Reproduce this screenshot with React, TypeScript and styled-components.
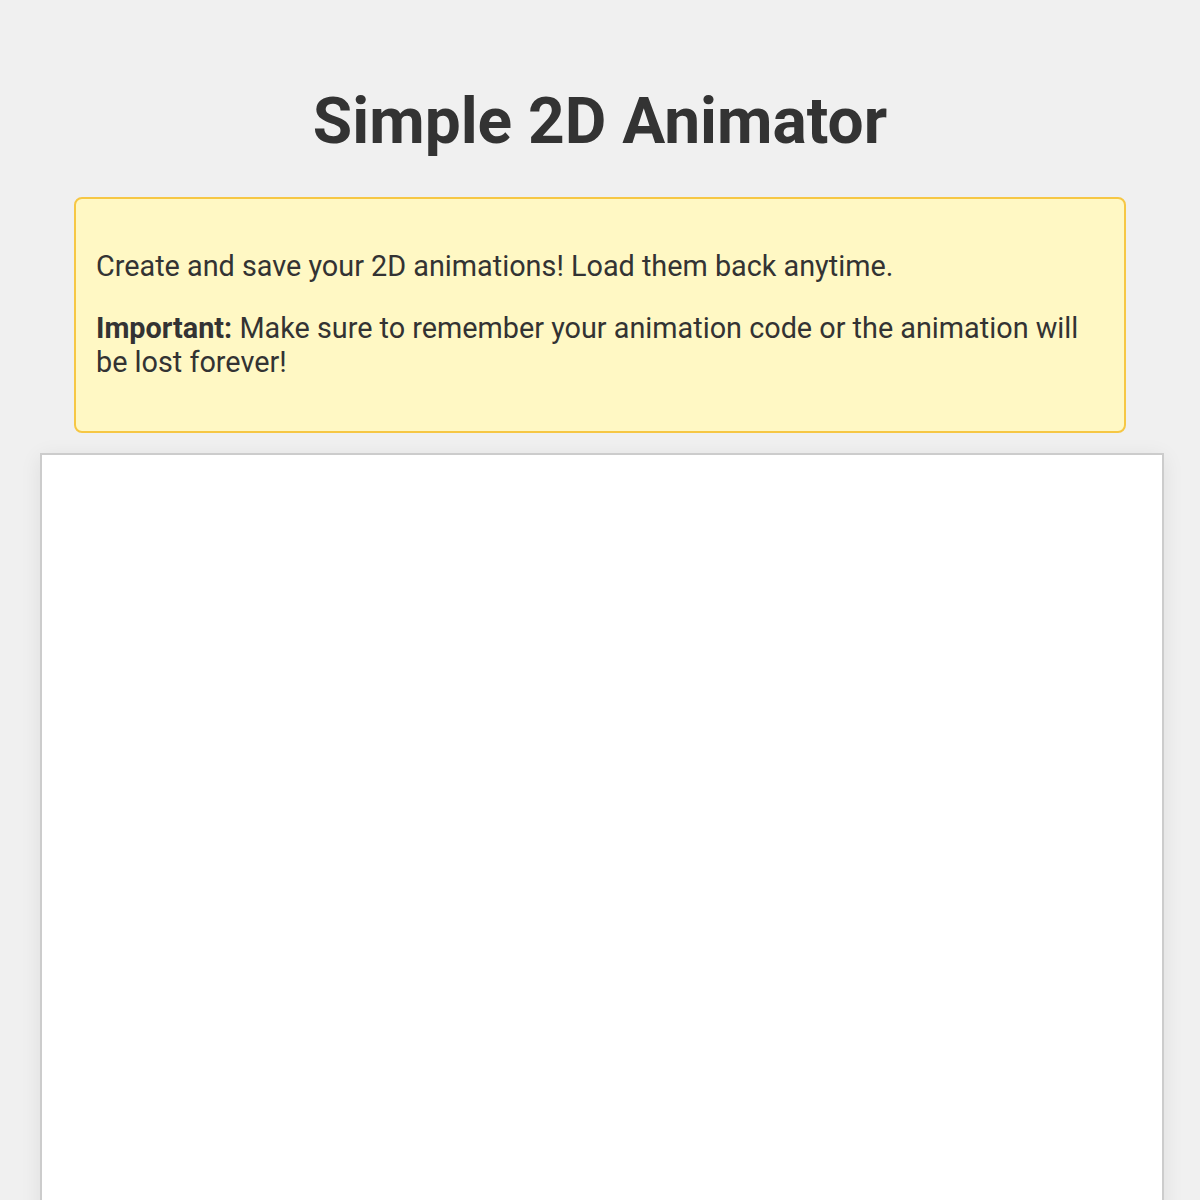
import React from "react";
import styled, { createGlobalStyle } from "styled-components";

const GlobalStyle = createGlobalStyle`
  html, body {
    margin: 0;
    padding: 0;
    background: #f0f0f0;
    font-family: Roboto, "Liberation Sans", Arial, sans-serif;
    color: #333;
  }
`;

const Page = styled.div`
  padding: 0 36px 0 40px;
  display: flex;
  flex-direction: column;
  align-items: stretch;
`;

const Title = styled.h1`
  margin: 84px 0 36px;
  padding-right: 4px;
  text-align: center;
  font-size: 64px;
  line-height: 1.2;
  font-weight: 700;
  color: #333;
`;

const Notice = styled.div`
  margin: 0 38px 0 34px;
  padding: 21px 20px 23px;
  background: #fff8c4;
  border: 2px solid #f6c744;
  border-radius: 8px;
  font-size: 28.8px;
  line-height: normal;
`;

const Para = styled.p`
  margin: 1em 0;
`;

const Canvas = styled.div`
  margin: 20px 0 0;
  height: 760px;
  background: #fff;
  border: 2px solid #ccc;
  box-shadow: 0 4px 20px rgba(0, 0, 0, 0.08);
`;

export default function App() {
  return (
    <>
      <GlobalStyle />
      <Page>
        <Title>Simple 2D Animator</Title>
        <Notice>
          <Para>Create and save your 2D animations! Load them back anytime.</Para>
          <Para>
            <strong>Important:</strong> Make sure to remember your animation code
            or the animation will be lost forever!
          </Para>
        </Notice>
        <Canvas />
      </Page>
    </>
  );
}
